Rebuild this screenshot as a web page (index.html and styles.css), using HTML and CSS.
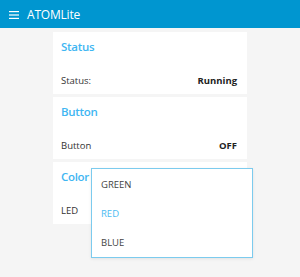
FILE: index.html
```html
<!DOCTYPE html>
<html>
<head>
<meta charset="utf-8">
<link rel="stylesheet" href="styles.css">
</head>
<body>
<header class="topbar">
  <svg class="menu-icon" width="10" height="8" viewBox="0 0 10 8"><rect x="0" y="0" width="10" height="1.2" fill="#fff"/><rect x="0" y="3.4" width="10" height="1.2" fill="#fff"/><rect x="0" y="6.8" width="10" height="1.2" fill="#fff"/></svg>
  <span class="brand">ATOMLite</span>
</header>
<main class="content">
  <section class="card">
    <div class="card-title">Status</div>
    <div class="row"><span class="label">Status:</span><span class="value">Running</span></div>
  </section>
  <section class="card">
    <div class="card-title">Button</div>
    <div class="row"><span class="label">Button</span><span class="value">OFF</span></div>
  </section>
  <section class="card card-select">
    <div class="card-title">Color</div>
    <div class="row"><span class="label">LED</span></div>
    <ul class="dropdown">
      <li class="option">GREEN</li>
      <li class="option selected">RED</li>
      <li class="option">BLUE</li>
    </ul>
  </section>
</main>
</body>
</html>
```
FILE: styles.css
```css
html, body {
  margin: 0;
  padding: 0;
}
body {
  background: #f5f5f5;
  font-family: "Open Sans", "Noto Sans", sans-serif;
  width: 300px;
  height: 277px;
  overflow: hidden;
}
.topbar {
  height: 28px;
  background: #0096d0;
  display: flex;
  align-items: center;
  padding-left: 9px;
  box-sizing: border-box;
}
.menu-icon {
  display: block;
  margin-top: 1px;
}
.brand {
  color: #fff;
  font-size: 12px;
  margin-left: 8px;
  letter-spacing: -0.2px;
}
.content {
  width: 194px;
  margin: 4px auto 0;
  display: flex;
  flex-direction: column;
  gap: 3px;
}
.card {
  background: #fff;
  padding: 7px 8px 0;
  height: 62px;
  box-sizing: border-box;
}
.card-title {
  color: #3fb6f2;
  font-size: 11.5px;
  font-weight: 600;
  line-height: 16px;
  letter-spacing: -0.3px;
}
.row {
  margin-top: 11px;
  height: 28px;
  display: flex;
  align-items: center;
  justify-content: space-between;
  padding-right: 2px;
  font-size: 9.5px;
}
.label {
  color: #333;
}
.value {
  color: #222;
  font-weight: 700;
}
.card-select {
  position: relative;
}
.dropdown {
  position: absolute;
  left: 38px;
  top: 6px;
  width: 162px;
  height: 90px;
  margin: 0;
  padding: 1px 0 0;
  list-style: none;
  background: #fff;
  border: 1px solid #7ccbee;
  box-sizing: border-box;
  box-shadow: 0 1px 3px rgba(0,0,0,0.08);
}
.option {
  height: 29px;
  line-height: 29px;
  padding-left: 9px;
  font-size: 9.5px;
  color: #444;
}
.option.selected {
  color: #4cbcf2;
}
```
